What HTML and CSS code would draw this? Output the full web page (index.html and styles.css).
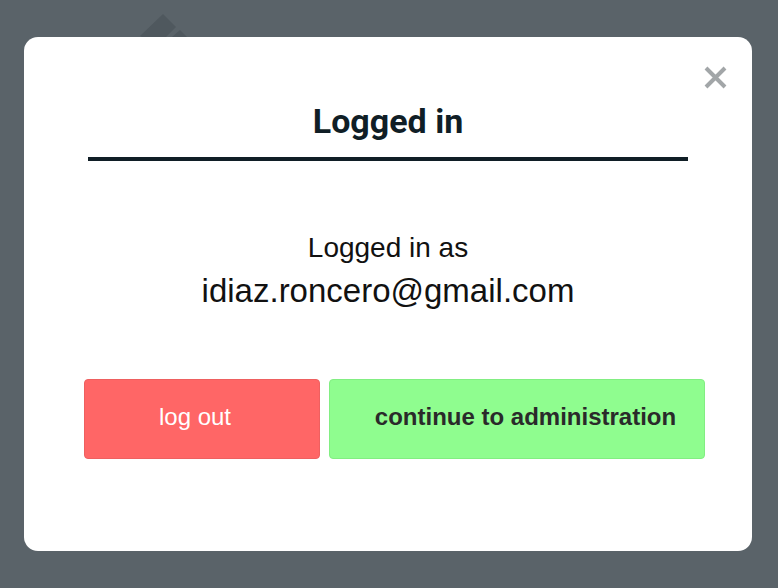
FILE: index.html
```html
<!DOCTYPE html>
<html>
<head>
<meta charset="utf-8">
<link rel="stylesheet" href="styles.css">
</head>
<body>
<svg class="bg-logo" width="778" height="60" viewBox="0 0 778 60">
  <polygon points="163,14 176,27 166,37 142,37 140,36" fill="#4f585e"/>
  <polygon points="180,30 187,37 172,37" fill="#4f585e"/>
</svg>
<div class="modal">
  <button class="close" aria-label="close">
    <svg width="23" height="23" viewBox="0 0 23 23"><path d="M2 2 L21 21 M21 2 L2 21" stroke="#a2a6a8" stroke-width="4" stroke-linecap="butt"/></svg>
  </button>
  <h1 class="title">Logged in</h1>
  <p class="label">Logged in as</p>
  <p class="email">idiaz.roncero@gmail.com</p>
  <div class="actions">
    <button class="btn btn-logout">log out</button>
    <button class="btn btn-continue">continue to administration</button>
  </div>
</div>
</body>
</html>
```
FILE: styles.css
```css
html, body {
  margin: 0;
  padding: 0;
}
body {
  background: #5a6369;
  width: 778px;
  height: 588px;
  overflow: hidden;
  position: relative;
  padding-top: 37px;
  box-sizing: border-box;
  font-family: "Liberation Sans", Arial, sans-serif;
}
.bg-logo {
  position: absolute;
  left: 0;
  top: 0;
}
.modal {
  position: relative;
  margin-left: 24px;
  width: 728px;
  height: 514px;
  background: #ffffff;
  border-radius: 14px;
  box-sizing: border-box;
  padding-top: 64px;
  display: flex;
  flex-direction: column;
  align-items: center;
}
.close {
  position: absolute;
  top: 29px;
  right: 25px;
  width: 23px;
  height: 23px;
  padding: 0;
  border: none;
  background: none;
  display: block;
}
.close svg { display: block; }
.title {
  margin: 0;
  width: 600px;
  text-align: center;
  font-family: Roboto, "Liberation Sans", sans-serif;
  font-weight: 700;
  font-size: 34px;
  line-height: 40px;
  color: #101e26;
  padding-bottom: 16px;
  border-bottom: 4px solid #101e26;
}
.label {
  margin: 70px 0 0;
  font-size: 28px;
  line-height: 34px;
  color: #111;
}
.email {
  margin: 6px 0 0;
  font-size: 33px;
  line-height: 40px;
  color: #111;
}
.actions {
  align-self: flex-start;
  margin: 68px 0 0 60px;
  display: flex;
  gap: 9px;
}
.btn {
  height: 80px;
  border-radius: 4px;
  font-family: "Liberation Sans", Arial, sans-serif;
  font-size: 24px;
  box-sizing: border-box;
  margin: 0;
}
.btn-logout {
  width: 236px;
  background: #ff6666;
  border: 1px solid #ee6060;
  color: #ffffff;
  padding: 0 14px 4px 0;
}
.btn-continue {
  width: 376px;
  background: #8ffd8f;
  border: 1px solid #82ee82;
  color: #2a2a2a;
  font-weight: 700;
  padding: 0 0 4px 17px;
}
```
